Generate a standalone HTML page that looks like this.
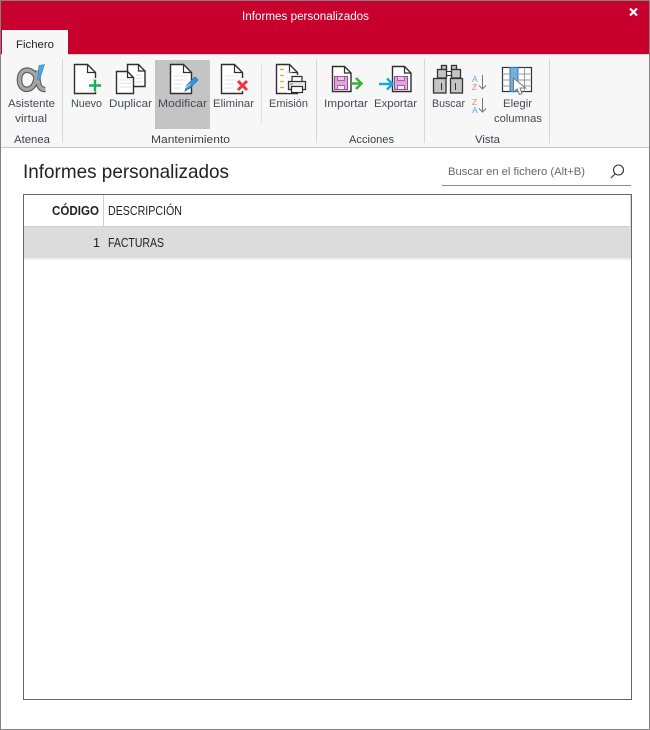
<!DOCTYPE html>
<html><head><meta charset="utf-8"><style>
html,body{margin:0;padding:0;background:#fff}
svg{display:block}
text{font-family:"Liberation Sans",sans-serif}
.l{font-size:11px;fill:#444a55}
.g{font-size:11px;fill:#3a3f4a}
.d{fill:#fff;stroke:#2e2e2e;stroke-width:1.4}
.f{fill:none;stroke:#2e2e2e;stroke-width:1.2}
.m{stroke:#e2e2e2;stroke-width:1}
.s{stroke:#d8d8d8;stroke-width:1}
</style></head><body>
<svg width="650" height="730" viewBox="0 0 650 730" xmlns="http://www.w3.org/2000/svg">
<rect width="650" height="730" fill="#fff"/>
<rect x="1" y="1" width="648" height="53" fill="#c8002d"/>
<rect x="1" y="54" width="648" height="93" fill="#f7f7f7"/>
<rect x="1" y="54" width="648" height="1" fill="#d4d4d4"/>
<rect x="1" y="147" width="648" height="1" fill="#c8c8c8"/>
<rect x="2" y="30" width="66" height="25" fill="#f7f7f7"/>
<rect x="0.5" y="0.5" width="649" height="729" fill="none" stroke="#828282"/>
<text x="242" y="20" textLength="127" lengthAdjust="spacingAndGlyphs" font-size="11.5" fill="#fff">Informes personalizados</text>
<path d="M630 8.500l7 7M637 8.500l-7 7" stroke="#fff" stroke-width="2.200" fill="none"/>
<text x="16" y="48" textLength="38" lengthAdjust="spacingAndGlyphs" font-size="11" fill="#222">Fichero</text>

<!-- separators -->
<path d="M62.500 59V143M316.500 59V143M424.500 59V143M549.500 59V143" class="s"/>
<path d="M261.500 65V123" stroke="#dedede"/>
<rect x="155" y="60" width="55" height="69" fill="#c4c4c4"/>

<!-- alpha -->
<path d="M36.500 78C33 67.500 19.500 67 19.500 80C19.500 92 32.500 92.500 35.500 81C36.500 77 37 74 38 71C37.500 80 37.500 90 45.500 89.500" fill="none" stroke="#5a5a5a" stroke-width="5.600"/>
<path d="M36.500 78C33 67.500 19.500 67 19.500 80C19.500 92 32.500 92.500 35.500 81C36.500 77 37 74 38 71C37.500 80 37.500 90 45.500 89.500" fill="none" stroke="#a6a6a6" stroke-width="3.400"/>
<path d="M39 65.500L44.500 64.500L39.500 80L37.500 80Z" fill="#4aa8e0" stroke="#2f7fb8" stroke-width=".6"/>

<!-- nuevo -->
<path d="M74.500 64.500H87.500L95.500 72.500V93.500H74.500Z" class="d"/><path d="M87.500 64.500V72.500H95.500" class="f"/>
<rect x="88" y="78" width="14" height="14" fill="#f7f7f7"/>
<path d="M89 85.500H101M95 79.500V91.500" stroke="#18ad57" stroke-width="2.400" fill="none"/>

<!-- duplicar -->
<path d="M127.500 64.500H138.500L145 71V86.500H127.500Z" class="d"/><path d="M138.500 64.500V71H145" class="f"/>
<path d="M136 75H142M136 78.500H142M136 82H142" class="m"/>
<path d="M116.500 71.500H127.500L133.500 77.500V93.500H116.500Z" class="d"/><path d="M127.500 71.500V77.500H133.500" class="f"/>
<path d="M119 80H131M119 83.500H131M119 87H131" class="m"/>

<!-- modificar -->
<path d="M170.500 64.500H183.500L191.500 72.500V93.500H170.500Z" class="d"/><path d="M183.500 64.500V72.500H191.500" class="f"/>
<path d="M174 76H187M174 80H187M174 84H183M174 88H181" class="m"/>
<path d="M185 91L187 85L195 77L198 80L190 88Z" fill="#3c94d6" stroke="#2376b4" stroke-width=".8"/>
<path d="M186 87.500L190 84" stroke="#cfe6f6" fill="none"/>

<!-- eliminar -->
<path d="M221.500 64.500H234.500L242.500 72.500V93.500H221.500Z" class="d"/><path d="M234.500 64.500V72.500H242.500" class="f"/>
<path d="M225 76H238M225 80H236M225 84H234M225 88H234" class="m"/>
<rect x="236" y="78" width="13" height="13" fill="#f7f7f7"/>
<path d="M238 81L247 90M247 81L238 90" stroke="#ee3440" stroke-width="3" fill="none"/>

<!-- emision -->
<path d="M276.500 64.500H289.500L297.500 72.500V93.500H276.500Z" class="d"/><path d="M289.500 64.500V72.500H297.500" class="f"/>
<path d="M280 69.500H284M280 75.500H284M280 81.500H284M280 87.500H284" stroke="#f0a030" stroke-width="1.200"/>
<path d="M286 72H292M286 78H290M286 84H288" stroke="#cfcfcf"/>
<rect x="287" y="75" width="18" height="18" fill="#f7f7f7"/>
<path d="M292 82.500V76.500H302V82.500" fill="#fff" stroke="#2e2e2e" stroke-width="1.200"/>
<rect x="288.500" y="81.500" width="17" height="8" fill="#e6e6e6" stroke="#2e2e2e" stroke-width="1.200"/>
<rect x="291.500" y="86.500" width="11" height="6" fill="#fff" stroke="#2e2e2e" stroke-width="1.200"/>
<path d="M290 84H293" stroke="#3c94d6"/>

<!-- importar -->
<path d="M332.500 66.500H344.500L351 73V91.500H332.500Z" class="d"/><path d="M344.500 66.500V73H351" class="f"/>
<path d="M334.500 76.500H347.500V89.500H334.500Z" fill="#dba9d5" stroke="#a0479c"/>
<rect x="337.500" y="76.500" width="7" height="4" fill="#e8c8e4" stroke="#a0479c" stroke-width=".8"/>
<rect x="337.500" y="85.500" width="7" height="4" fill="#f4e8f2" stroke="#a0479c" stroke-width=".8"/>
<path d="M351 83.500H361M356 78L361.500 83.500L356 89" fill="none" stroke="#3fae3a" stroke-width="2.400"/>

<!-- exportar -->
<path d="M392.500 66.500H404.500L411 73V91.500H392.500Z" class="d"/><path d="M404.500 66.500V73H411" class="f"/>
<path d="M394.500 76.500H407.500V89.500H394.500Z" fill="#dba9d5" stroke="#a0479c"/>
<rect x="397.500" y="76.500" width="7" height="4" fill="#e8c8e4" stroke="#a0479c" stroke-width=".8"/>
<rect x="397.500" y="85.500" width="7" height="4" fill="#f4e8f2" stroke="#a0479c" stroke-width=".8"/>
<path d="M379 84H392M387 78.500L392.500 84L387 89.500" fill="none" stroke="#12a8e2" stroke-width="2.400"/>

<!-- buscar binoculars -->
<g fill="#c4c4c4" stroke="#333" stroke-width="1.300">
<rect x="441.500" y="65.500" width="5" height="4"/><rect x="451.500" y="65.500" width="5" height="4"/>
<rect x="437.500" y="69.500" width="9" height="8.500"/><rect x="451.500" y="69.500" width="9" height="8.500"/>
<rect x="433.500" y="78.500" width="12.500" height="14.500"/><rect x="450.500" y="78.500" width="12" height="14.500"/>
</g>
<path d="M446.500 71.500H451.500M446.500 75.500H451.500" stroke="#333"/>
<path d="M441.500 83V90M455.500 83V90" stroke="#333"/>

<!-- sort -->
<text x="472" y="82" font-size="8.500" fill="#5aaee6">A</text><text x="472" y="90" font-size="8.500" fill="#f07a80">Z</text>
<path d="M482.500 75V89M479 85.500L482.500 89L486 85.500" fill="none" stroke="#777"/>
<text x="472" y="105" font-size="8.500" fill="#f07a80">Z</text><text x="472" y="113" font-size="8.500" fill="#5aaee6">A</text>
<path d="M482.500 98V112M479 108.500L482.500 112L486 108.500" fill="none" stroke="#777"/>

<!-- elegir columnas -->
<rect x="502.500" y="67.500" width="29" height="24" fill="#fff" stroke="#333" stroke-width="1.200"/>
<rect x="510" y="67.500" width="8" height="24" fill="#6cb2e2" stroke="#2a7cb8"/>
<path d="M502.500 74H531.500M502.500 80H531.500M502.500 86H531.500M524.500 67.500V91.500" stroke="#9a9a9a" fill="none"/>
<path d="M513.500 78V92L517 89L519.500 94.500L522 93.500L520 88L525.500 88Z" fill="#fff" stroke="#777"/>

<!-- labels -->
<g class="l">
<text x="8" y="107" textLength="47" lengthAdjust="spacingAndGlyphs">Asistente</text>
<text x="15" y="122" textLength="32" lengthAdjust="spacingAndGlyphs">virtual</text>
<text x="71" y="107" textLength="31" lengthAdjust="spacingAndGlyphs">Nuevo</text>
<text x="109" y="107" textLength="43" lengthAdjust="spacingAndGlyphs">Duplicar</text>
<text x="158" y="107" textLength="49" lengthAdjust="spacingAndGlyphs">Modificar</text>
<text x="213" y="107" textLength="41" lengthAdjust="spacingAndGlyphs">Eliminar</text>
<text x="269" y="107" textLength="39" lengthAdjust="spacingAndGlyphs">Emisión</text>
<text x="324" y="107" textLength="44" lengthAdjust="spacingAndGlyphs">Importar</text>
<text x="374" y="107" textLength="43" lengthAdjust="spacingAndGlyphs">Exportar</text>
<text x="432" y="107" textLength="33" lengthAdjust="spacingAndGlyphs">Buscar</text>
<text x="503" y="107" textLength="29" lengthAdjust="spacingAndGlyphs">Elegir</text>
<text x="494" y="122" textLength="48" lengthAdjust="spacingAndGlyphs">columnas</text>
</g>
<g class="g">
<text x="14" y="143" textLength="36" lengthAdjust="spacingAndGlyphs">Atenea</text>
<text x="151" y="143" textLength="79" lengthAdjust="spacingAndGlyphs">Mantenimiento</text>
<text x="349" y="143" textLength="45" lengthAdjust="spacingAndGlyphs">Acciones</text>
<text x="475" y="143" textLength="25" lengthAdjust="spacingAndGlyphs">Vista</text>
</g>

<!-- heading + search -->
<text x="23" y="178" textLength="206" lengthAdjust="spacingAndGlyphs" font-size="19.500" fill="#222">Informes personalizados</text>
<text x="448" y="175" textLength="137" lengthAdjust="spacingAndGlyphs" font-size="11" fill="#666">Buscar en el fichero (Alt+B)</text>
<rect x="442" y="185" width="189" height="1" fill="#8a8a8a"/>
<circle cx="618.500" cy="170" r="5" fill="none" stroke="#333" stroke-width="1.100"/>
<path d="M615 174L611 178" stroke="#333" stroke-width="1.100"/>

<!-- table -->
<rect x="23.500" y="194.500" width="608" height="505" fill="#fff" stroke="#666"/>
<rect x="24" y="226" width="607" height="1" fill="#d0d0d0"/>
<rect x="24" y="227" width="607" height="31" fill="#dcdcdc"/>
<rect x="24" y="258" width="607" height="2" fill="#eeeeee"/>
<rect x="103" y="195" width="1" height="31" fill="#d0d0d0"/>
<rect x="630" y="195" width="1" height="31" fill="#d8d8d8"/>
<text x="52" y="215" textLength="47" lengthAdjust="spacingAndGlyphs" font-size="12.500" font-weight="bold" fill="#222">CÓDIGO</text>
<text x="108" y="215" textLength="74" lengthAdjust="spacingAndGlyphs" font-size="12.500" fill="#222">DESCRIPCIÓN</text>
<text x="100" y="247" text-anchor="end" font-size="12.500" fill="#222">1</text>
<text x="108" y="247" textLength="56" lengthAdjust="spacingAndGlyphs" font-size="12.500" fill="#222">FACTURAS</text>
</svg>
</body></html>
